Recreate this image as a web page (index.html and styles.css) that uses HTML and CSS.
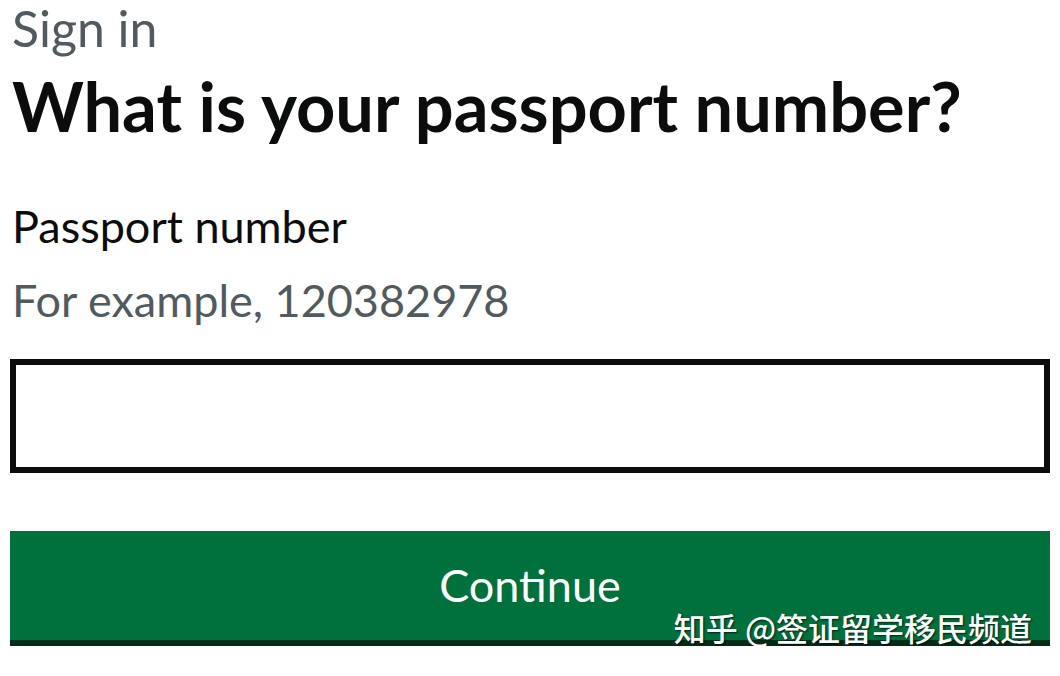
FILE: index.html
```html
<!DOCTYPE html>
<html lang="en">
<head>
<meta charset="utf-8">
<title>What is your passport number?</title>
<link rel="stylesheet" href="styles.css">
</head>
<body>
<main class="page">
  <span class="caption">Sign in</span>
  <h1 class="heading">What is your passport number?</h1>
  <label class="label" for="passport">Passport number</label>
  <div class="hint">For example, 120382978</div>
  <input class="input" id="passport" type="text">
  <div class="actions">
    <button class="button" type="button">Continue</button>
    <span class="watermark">知乎 @签证留学移民频道</span>
  </div>
</main>
</body>
</html>
```
FILE: styles.css
```css
* { box-sizing: border-box; }
html, body { margin: 0; padding: 0; background: #ffffff; }
body { font-family: Lato, "Noto Sans", sans-serif; color: #0b0c0c; }
.page {
  display: flex;
  flex-direction: column;
  align-items: stretch;
  padding: 0 10px 0 10px;
  width: 1060px;
}
.caption {
  display: block;
  font-size: 50px;
  line-height: 56px;
  color: #505a5f;
  margin: 0 0 0 2px;
}
.heading {
  font-size: 68.5px;
  line-height: 80px;
  font-weight: 700;
  margin: 10px 0 0 2px;
}
.label {
  font-size: 45px;
  line-height: 50px;
  margin: 55px 0 0 2px;
}
.hint {
  font-size: 45px;
  line-height: 50px;
  color: #505a5f;
  margin: 24px 0 0 2px;
}
.input {
  display: block;
  width: 1040px;
  height: 114px;
  border: 6px solid #0b0c0c;
  margin: 34px 0 0 0;
  padding: 0;
  background: #fff;
  font: inherit;
}
.actions {
  position: relative;
  margin: 58px 0 0 0;
  width: 1040px;
}
.button {
  display: block;
  width: 1040px;
  height: 115px;
  margin: 0;
  padding: 0;
  border: 0;
  border-bottom: 6px solid #002d18;
  border-radius: 0;
  background: #00703c;
  color: #ffffff;
  font-family: Lato, "Noto Sans", sans-serif;
  font-size: 45px;
  line-height: 109px;
  text-align: center;
}
.watermark {
  position: absolute;
  right: 18px;
  top: 80px;
  font-family: "Noto Sans CJK SC", sans-serif;
  font-size: 32px;
  font-weight: 500;
  line-height: 32px;
  color: #ffffff;
  white-space: nowrap;
  text-shadow: 1px 1px 2px rgba(0,0,0,0.7);
}
```
